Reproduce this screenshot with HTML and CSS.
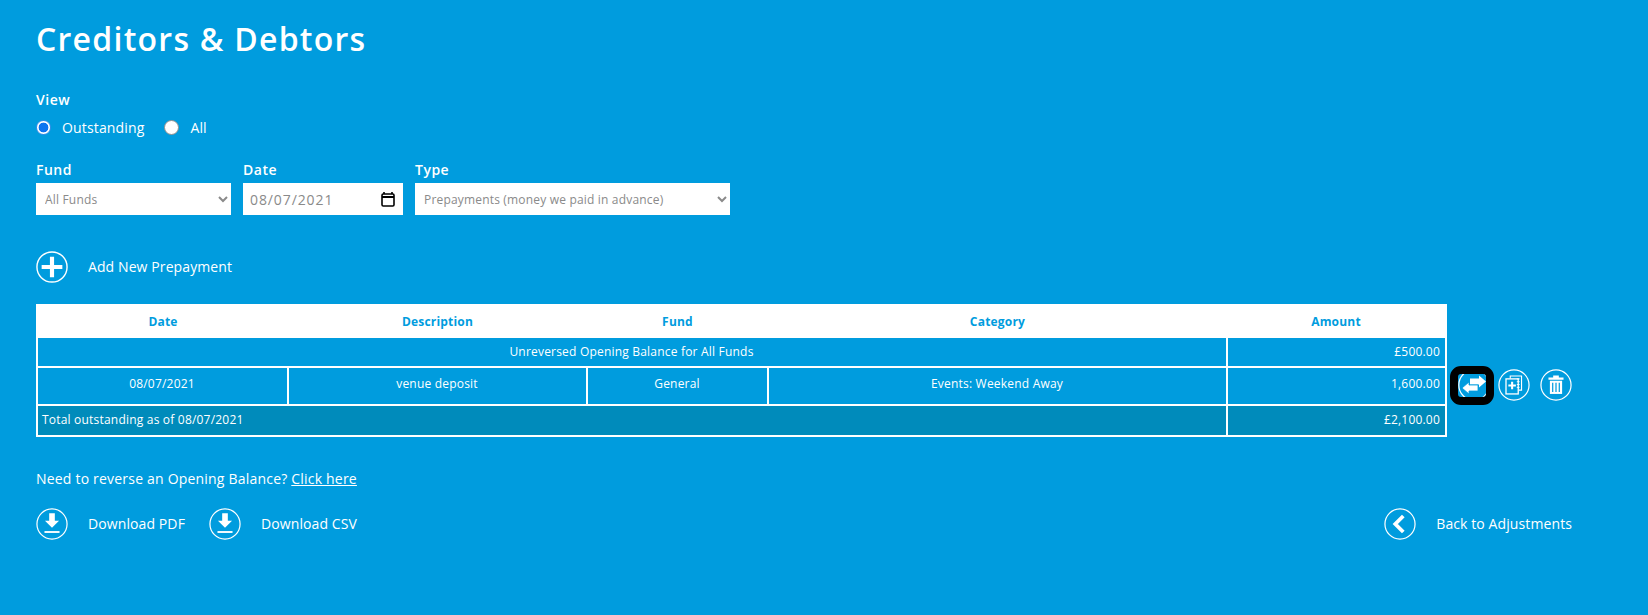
FILE: index.html
```html
<!DOCTYPE html>
<html lang="en">
<head>
<meta charset="utf-8">
<title>Creditors &amp; Debtors</title>
<link rel="stylesheet" href="styles.css">
</head>
<body>
<main class="page">
  <h1 class="title">Creditors &amp; Debtors</h1>

  <div class="label view-label">View</div>
  <div class="radios">
    <label class="radio"><input type="radio" name="view" checked><span>Outstanding</span></label>
    <label class="radio"><input type="radio" name="view"><span>All</span></label>
  </div>

  <div class="filters">
    <div class="field">
      <label class="label">Fund</label>
      <select class="control fund"><option>All Funds</option></select>
    </div>
    <div class="field">
      <label class="label">Date</label>
      <div class="control date">
        <input class="date-input" type="text" value="08/07/2021">
        <svg class="cal" viewBox="0 0 14 15" width="14" height="15"><path d="M3 0v2M11 0v2" stroke="#000" stroke-width="1.6" fill="none"/><rect x="1" y="2" width="12" height="12" rx="1.2" fill="none" stroke="#000" stroke-width="1.6"/><path d="M1 5h12" stroke="#000" stroke-width="2"/></svg>
      </div>
    </div>
    <div class="field">
      <label class="label">Type</label>
      <select class="control type"><option>Prepayments (money we paid in advance)</option></select>
    </div>
  </div>

  <a class="action add">
    <svg class="circle-icon" viewBox="0 0 34 34" width="32" height="32"><circle cx="17" cy="17" r="16" fill="none" stroke="#fff" stroke-width="1.5"/><path d="M17 6v22M6 17h22" stroke="#fff" stroke-width="4.4"/></svg>
    <span>Add New Prepayment</span>
  </a>

  <div class="table-row">
    <table class="ledger">
      <colgroup><col class="c1"><col class="c2"><col class="c3"><col class="c4"><col class="c5"></colgroup>
      <thead>
        <tr><th>Date</th><th>Description</th><th>Fund</th><th>Category</th><th>Amount</th></tr>
      </thead>
      <tbody>
        <tr class="r-open"><td colspan="4">Unreversed Opening Balance for All Funds</td><td class="num">£500.00</td></tr>
        <tr class="r-item"><td>08/07/2021</td><td>venue deposit</td><td>General</td><td>Events: Weekend Away</td><td class="num">1,600.00</td></tr>
        <tr class="r-total"><td colspan="4" class="left">Total outstanding as of 08/07/2021</td><td class="num">£2,100.00</td></tr>
      </tbody>
    </table>
    <div class="row-actions">
      <button class="icon-btn focused" aria-label="Reverse">
        <svg viewBox="0 0 32 32" width="32" height="32"><circle cx="16" cy="16" r="15.2" fill="none" stroke="#fff" stroke-width="1.2"/><path d="M12 9.500h9v-3l7 6-7 6v-3h-9z" fill="#fff"/><path d="M20 16h-9v-3l-7 6 7 6v-3h9z" fill="#fff" stroke="#009cde" stroke-width="0.8"/></svg>
      </button>
      <button class="icon-btn" aria-label="Copy">
        <svg viewBox="0 0 34 34" width="32" height="32"><circle cx="17" cy="17" r="16" fill="none" stroke="#fff" stroke-width="1.3"/><path d="M13 10V7.500h12v15h-3" fill="none" stroke="#fff" stroke-width="1.2"/><path d="M20 10.500h3M20 13.500h3M20 16.500h3M20 19.500h3" stroke="#fff"/><rect x="8.500" y="10.500" width="13" height="16" fill="none" stroke="#fff" stroke-width="1.4"/><path d="M15 13.500v8M11 17.500h8" stroke="#fff" stroke-width="2.200"/></svg>
      </button>
      <button class="icon-btn" aria-label="Delete">
        <svg viewBox="0 0 34 34" width="32" height="32"><circle cx="17" cy="17" r="16" fill="none" stroke="#fff" stroke-width="1.3"/><path d="M14 9V7h6v2h5v2.500H9V9z" fill="#fff"/><path d="M10.500 12.500h13V26.500h-13z" fill="#fff"/><path d="M13.500 14.500v10M17 14.500v10M20.500 14.500v10" stroke="#009cde" stroke-width="1.300"/></svg>
      </button>
    </div>
  </div>

  <p class="note">Need to reverse an Opening Balance? <a class="link">Click here</a></p>

  <div class="footer">
    <div class="downloads">
      <a class="action">
        <svg class="circle-icon" viewBox="0 0 34 34" width="32" height="32"><circle cx="17" cy="17" r="16" fill="none" stroke="#fff" stroke-width="1.300"/><path d="M14 5.500h6v8h4.500L17 21l-7.500-7.500H14z" fill="#fff"/><path d="M9 25.500h16" stroke="#fff" stroke-width="2"/></svg>
        <span>Download PDF</span>
      </a>
      <a class="action">
        <svg class="circle-icon" viewBox="0 0 34 34" width="32" height="32"><circle cx="17" cy="17" r="16" fill="none" stroke="#fff" stroke-width="1.300"/><path d="M14 5.500h6v8h4.500L17 21l-7.500-7.500H14z" fill="#fff"/><path d="M9 25.500h16" stroke="#fff" stroke-width="2"/></svg>
        <span>Download CSV</span>
      </a>
    </div>
    <a class="action">
      <svg class="circle-icon" viewBox="0 0 34 34" width="32" height="32"><circle cx="17" cy="17" r="16" fill="none" stroke="#fff" stroke-width="1.300"/><path d="M20.500 8.500L12 17l8.500 8.500" fill="none" stroke="#fff" stroke-width="4"/></svg>
      <span>Back to Adjustments</span>
    </a>
  </div>
</main>
</body>
</html>
```

FILE: styles.css
```css
* { box-sizing: border-box; }
html, body { margin: 0; padding: 0; }
body {
  background: #009cde;
  color: #fff;
  font-family: "Open Sans", sans-serif;
  font-size: 13px;
  letter-spacing: 0.15px;
  min-height: 615px;
}
.page { width: 1536px; margin-left: 36px; padding-top: 16px; }
.title {
  margin: 0;
  font-size: 32px;
  line-height: 46px;
  font-weight: 600;
  letter-spacing: 1.25px;
}
.label {
  display: block;
  font-size: 14px;
  font-weight: 600;
  line-height: 19px;
  letter-spacing: 0.5px;
}
.view-label { margin-top: 28px; }
.radios { display: flex; gap: 20px; margin-top: 8px; height: 20px; align-items: center; }
.radio { display: flex; align-items: center; gap: 11px; font-size: 14px; }
.radio input {
  appearance: none;
  margin: 0;
  width: 15px;
  height: 15px;
  border-radius: 50%;
  background: #fff;
  border: 1px solid #8f8f8f;
}
.radio input:checked {
  border: 1px solid #3a8ee8;
  background: radial-gradient(circle, #0b74f0 0 4.6px, #fff 5.2px);
}
.filters { display: flex; gap: 12px; margin-top: 23px; }
.field { display: flex; flex-direction: column; gap: 4px; }
.control {
  height: 32px;
  border: 0;
  border-radius: 0;
  background-color: #fff;
  color: #8a8a8a;
  font-family: "Open Sans", sans-serif;
  font-size: 12px;
  letter-spacing: 0.18px;
  padding: 0 4px 0 5px;
}
.fund { width: 195px; }
.type { width: 315px; }
.date {
  width: 160px;
  display: flex;
  align-items: center;
  justify-content: space-between;
  padding: 0 8px 0 7px;
}
.date-input {
  border: 0;
  padding: 0;
  width: 110px;
  background: transparent;
  color: #8a8a8a;
  font-family: "Open Sans", sans-serif;
  font-size: 14px;
  letter-spacing: 0.9px;
}
.action {
  display: flex;
  align-items: center;
  gap: 20px;
  color: #fff;
  font-size: 14px;
  line-height: 32px;
  letter-spacing: 0.1px;
}
.circle-icon { flex: none; }
.add { margin-top: 36px; }
.table-row { display: flex; align-items: flex-start; margin-top: 21px; }
.ledger {
  width: 1411px;
  table-layout: fixed;
  border-collapse: collapse;
  border: 2px solid #fff;
  font-size: 12px;
  letter-spacing: 0.2px;
  flex: none;
}
.c1 { width: 251px; }
.c2 { width: 299px; }
.c3 { width: 181px; }
.c4 { width: 459px; }
.ledger th {
  background: #fff;
  color: #009cde;
  font-weight: 700;
  height: 32px;
  padding: 0;
  text-align: center;
  border: 0;
}
.ledger td { border: 2px solid #fff; text-align: center; padding: 0 5px 0 4px; }
.ledger td.num { text-align: right; }
.ledger td.left { text-align: left; }
.r-open td { height: 30px; padding-bottom: 2px; }
.r-item td { height: 38px; padding-bottom: 6px; }
.r-total td { height: 31px; padding-bottom: 2px; background: #008bbb; }
.row-actions {
  display: flex;
  align-items: center;
  gap: 10px;
  margin-left: 11px;
  margin-top: 65px;
}
.icon-btn {
  padding: 0;
  border: 0;
  background: none;
  width: 32px;
  height: 32px;
  display: block;
}
.icon-btn svg { display: block; }
.focused {
  width: 28px;
  height: 23px;
  margin-right: 2px;
  overflow: hidden;
  outline: 8px solid #000;
  border-radius: 3px;
}
.focused svg { margin: -4.5px 0 0 0; }
.note { margin: 32px 0 0; font-size: 14px; line-height: 19px; letter-spacing: 0.2px; }
.link { color: #fff; text-decoration: underline; }
.footer { display: flex; justify-content: space-between; margin-top: 20px; }
.downloads { display: flex; gap: 24px; }
```
